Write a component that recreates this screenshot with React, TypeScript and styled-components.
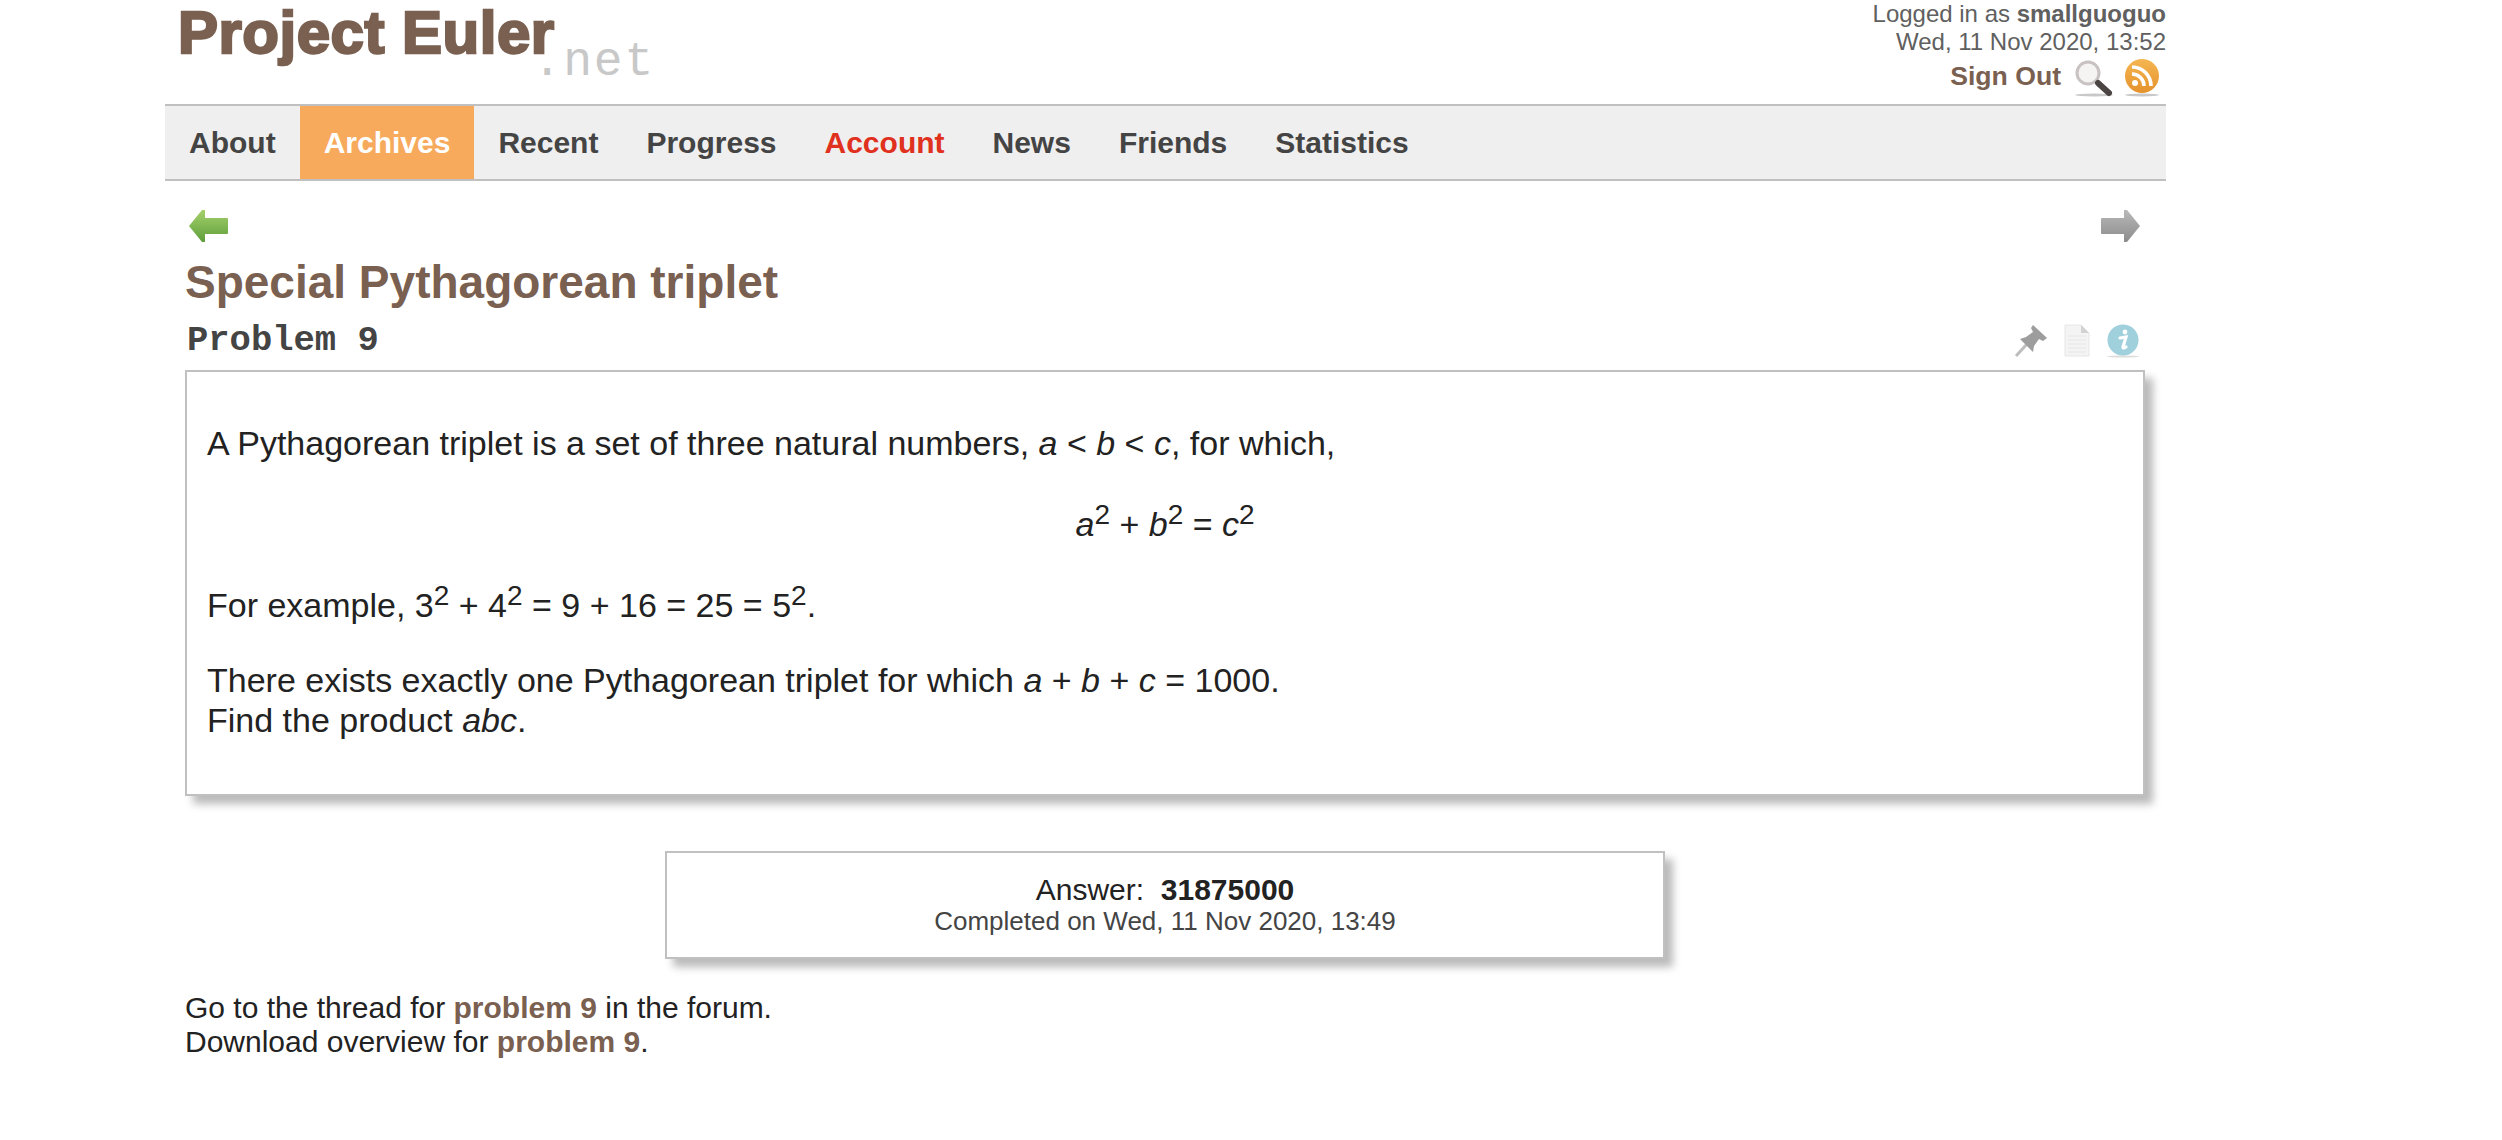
import React from "react";
import { createGlobalStyle, styled } from "styled-components";

const brown = "#7a6050";

const navItems = ["About", "Archives", "Recent", "Progress", "Account", "News", "Friends", "Statistics"];

const LeftArrow = () => (
  <StIcon width="42" height="36" viewBox="0 0 42 36">
    <defs>
      <linearGradient id="greenArrow" x1="0" y1="0" x2="0" y2="1">
        <stop offset="0" stopColor="#a4d06a" />
        <stop offset="1" stopColor="#5f9f3c" />
      </linearGradient>
    </defs>
    <path d="M1 18 L14 2 L17 2 L17 10 L39 10 Q40 10 40 11 L40 25 Q40 26 39 26 L17 26 L17 34 L14 34 Z" fill="url(#greenArrow)" />
  </StIcon>
);

const RightArrow = () => (
  <StIcon width="42" height="36" viewBox="0 0 42 36">
    <defs>
      <linearGradient id="greyArrow" x1="0" y1="0" x2="0" y2="1">
        <stop offset="0" stopColor="#b8b8b8" />
        <stop offset="1" stopColor="#8c8c8c" />
      </linearGradient>
    </defs>
    <path d="M41 18 L28 2 L25 2 L25 10 L3 10 Q2 10 2 11 L2 25 Q2 26 3 26 L25 26 L25 34 L28 34 Z" fill="url(#greyArrow)" />
  </StIcon>
);

const SearchIcon = () => (
  <StIcon width="42" height="42" viewBox="0 0 42 42">
    <ellipse cx="21" cy="38" rx="19" ry="1.5" fill="#c8c8c8" />
    <circle cx="15" cy="16" r="11" fill="#f6f3f3" stroke="#c9c2c2" strokeWidth="3" />
    <path d="M25 26 L36 36" stroke="#4a4442" strokeWidth="6" strokeLinecap="round" />
  </StIcon>
);

const RssIcon = () => (
  <StIcon width="42" height="42" viewBox="0 0 42 42">
    <defs>
      <linearGradient id="rssFill" x1="0" y1="0" x2="0" y2="1">
        <stop offset="0" stopColor="#f5b652" />
        <stop offset="1" stopColor="#e5922c" />
      </linearGradient>
    </defs>
    <ellipse cx="21" cy="38" rx="17" ry="1.5" fill="#c8c8c8" />
    <circle cx="21" cy="19" r="17" fill="url(#rssFill)" />
    <circle cx="14" cy="26" r="3" fill="#fff" />
    <path d="M11 17 A 12 12 0 0 1 23 29 M11 10 A 19 19 0 0 1 30 29" stroke="#fff" strokeWidth="3.6" fill="none" />
  </StIcon>
);

const PinIcon = () => (
  <StIcon width="34" height="34" viewBox="0 0 34 34">
    <path d="M2 32 L13 20" stroke="#bdbdbd" strokeWidth="3" />
    <path d="M19 1 L33 14 L29 17 L25 15 L20 22 L19 28 L6 15 L12 13 L19 8 L17 4 Z" fill="#9d9d9d" />
  </StIcon>
);

const PageIcon = () => (
  <StIcon width="30" height="34" viewBox="0 0 30 34">
    <path d="M3 1 L19 1 L27 9 L27 32 L3 32 Z" fill="#f4f4f4" stroke="#e6e6e6" />
    <path d="M19 1 L27 9 L19 9 Z" fill="#d2d2d2" />
    <path d="M6 12 H24 M6 16 H24 M6 20 H24 M6 24 H24 M6 28 H24" stroke="#e6e6e6" />
  </StIcon>
);

const InfoIcon = () => (
  <StIcon width="34" height="34" viewBox="0 0 34 34">
    <ellipse cx="17" cy="32.5" rx="16" ry="1" fill="#dcdcdc" />
    <circle cx="17" cy="16" r="15.5" fill="#9fd0dc" />
    <circle cx="19" cy="8" r="2.4" fill="#fff" />
    <path d="M14 14 L20 13 L17 23 Q17 25 20 23" stroke="#fff" strokeWidth="3.2" fill="none" strokeLinecap="round" />
  </StIcon>
);

export default function App() {
  return (
    <>
      <GlobalStyle />
      <StPage>
        <StHeader>
          <StLogo>
            <StLogoMain>Project Euler</StLogoMain>
            <StLogoNet>.net</StLogoNet>
          </StLogo>
          <StUserInfo>
            <StUserLine>
              Logged in as <strong>smallguoguo</strong>
            </StUserLine>
            <StUserLine>Wed, 11 Nov 2020, 13:52</StUserLine>
            <StSignRow>
              <StSignOut>Sign Out</StSignOut>
              <SearchIcon />
              <RssIcon />
            </StSignRow>
          </StUserInfo>
        </StHeader>

        <StNav>
          {navItems.map((item) => (
            <StNavItem key={item} $active={item === "Archives"} $alert={item === "Account"}>
              {item}
            </StNavItem>
          ))}
        </StNav>

        <StContent>
          <StArrowRow>
            <LeftArrow />
            <RightArrow />
          </StArrowRow>
          <StTitle>Special Pythagorean triplet</StTitle>
          <StProblemRow>
            <StProblemLabel>Problem 9</StProblemLabel>
            <StProblemIcons>
              <PinIcon />
              <PageIcon />
              <InfoIcon />
            </StProblemIcons>
          </StProblemRow>

          <StProblemBox>
            <StParagraph>
              A Pythagorean triplet is a set of three natural numbers, <i>a</i> &lt; <i>b</i> &lt; <i>c</i>, for which,
            </StParagraph>
            <StParagraph $center $hasSup>
              <i>a</i>
              <sup>2</sup> + <i>b</i>
              <sup>2</sup> = <i>c</i>
              <sup>2</sup>
            </StParagraph>
            <StParagraph $hasSup>
              For example, 3<sup>2</sup> + 4<sup>2</sup> = 9 + 16 = 25 = 5<sup>2</sup>.
            </StParagraph>
            <StParagraph>
              There exists exactly one Pythagorean triplet for which <i>a</i> + <i>b</i> + <i>c</i> = 1000.
              <br />
              Find the product <i>abc</i>.
            </StParagraph>
          </StProblemBox>

          <StAnswerBox>
            <StAnswerLine>
              Answer:&nbsp; <strong>31875000</strong>
            </StAnswerLine>
            <StCompleted>Completed on Wed, 11 Nov 2020, 13:49</StCompleted>
          </StAnswerBox>

          <StFooterText>
            Go to the thread for <StBrownLink>problem 9</StBrownLink> in the forum.
            <br />
            Download overview for <StBrownLink>problem 9</StBrownLink>.
          </StFooterText>
        </StContent>
      </StPage>
    </>
  );
}

const GlobalStyle = createGlobalStyle`
  body {
    margin: 0;
    background: #fff;
    font-family: "Liberation Sans", Arial, sans-serif;
    color: #222;
  }
`;

const StIcon = styled.svg`
  display: block;
  filter: blur(0.5px);
`;

const StPage = styled.div`
  width: 2001px;
  margin-left: 165px;
`;

const StHeader = styled.header`
  display: flex;
  justify-content: space-between;
  height: 104px;
`;

const StLogo = styled.div`
  display: flex;
  align-items: flex-start;
  padding: 1px 0 0 13px;
`;

const StLogoMain = styled.span`
  font-size: 60px;
  font-weight: 700;
  line-height: 64px;
  letter-spacing: 0.5px;
  color: ${brown};
  -webkit-text-stroke: 2.4px ${brown};
`;

const StLogoNet = styled.span`
  font-family: "Liberation Mono", monospace;
  font-size: 48px;
  line-height: 48px;
  letter-spacing: 1.8px;
  color: #c8c8c8;
  margin: 37px 0 0 -22px;
`;

const StUserInfo = styled.div`
  display: flex;
  flex-direction: column;
  align-items: flex-end;
  font-size: 24px;
  color: #606060;
`;

const StUserLine = styled.div`
  line-height: 28px;
`;

const StSignRow = styled.div`
  display: flex;
  align-items: center;
  gap: 6px;
  margin: 1px 3px 0 0;
`;

const StSignOut = styled.span`
  font-size: 26.6px;
  font-weight: 700;
  color: ${brown};
  margin-right: 6px;
  padding-bottom: 4px;
`;

const StNav = styled.nav`
  display: flex;
  height: 73px;
  background: #efefef;
  border-top: 2px solid #c0c0c0;
  border-bottom: 2px solid #c0c0c0;
`;

const StNavItem = styled.div<{ $active?: boolean; $alert?: boolean }>`
  display: flex;
  align-items: center;
  padding: 1px 24px 0;
  font-size: 30px;
  font-weight: 700;
  background: ${(props) => (props.$active ? "#f7a95c" : "transparent")};
  color: ${(props) => (props.$active ? "#fff" : props.$alert ? "#e0301e" : "#444")};
`;

const StContent = styled.main`
  padding: 0 20px;
`;

const StArrowRow = styled.div`
  display: flex;
  justify-content: space-between;
  padding: 27px 5px 0 3px;
`;

const StTitle = styled.h2`
  margin: 11px 0 0;
  font-size: 46px;
  line-height: 54px;
  font-weight: 700;
  color: ${brown};
`;

const StProblemRow = styled.div`
  display: flex;
  justify-content: space-between;
  align-items: center;
  margin-top: 12px;
`;

const StProblemLabel = styled.h3`
  margin: 0;
  padding-left: 2px;
  font-family: "Liberation Mono", monospace;
  font-size: 35.5px;
  line-height: 40px;
  font-weight: 700;
  color: #444;
`;

const StProblemIcons = styled.div`
  display: flex;
  align-items: center;
  gap: 14px;
  padding-right: 6px;
`;

const StProblemBox = styled.section`
  margin: 9px 0 0;
  width: 1960px;
  box-sizing: border-box;
  height: 426px;
  padding: 51px 20px 0;
  border: 2px solid #c0c0c0;
  box-shadow: 8px 8px 8px #bbb;
  font-size: 34px;
  line-height: 40px;
`;

const StParagraph = styled.p<{ $center?: boolean; $hasSup?: boolean }>`
  margin: 0 0 35px;
  padding-top: ${(props) => (props.$hasSup ? "6px" : "0")};
  text-align: ${(props) => (props.$center ? "center" : "left")};

  sup {
    line-height: 0;
    font-size: 28px;
  }
`;

const StAnswerBox = styled.section`
  margin: 55px 0 0 480px;
  width: 1000px;
  box-sizing: border-box;
  height: 108px;
  padding-bottom: 1px;
  display: flex;
  flex-direction: column;
  align-items: center;
  justify-content: center;
  border: 2px solid #c0c0c0;
  box-shadow: 8px 8px 8px #bbb;
`;

const StAnswerLine = styled.div`
  font-size: 30px;
  line-height: 32px;
  color: #222;
`;

const StCompleted = styled.div`
  font-size: 26px;
  line-height: 30px;
  color: #444;
`;

const StFooterText = styled.p`
  margin: 32px 0 0;
  font-size: 30px;
  line-height: 34px;
`;

const StBrownLink = styled.span`
  font-weight: 700;
  color: ${brown};
`;
